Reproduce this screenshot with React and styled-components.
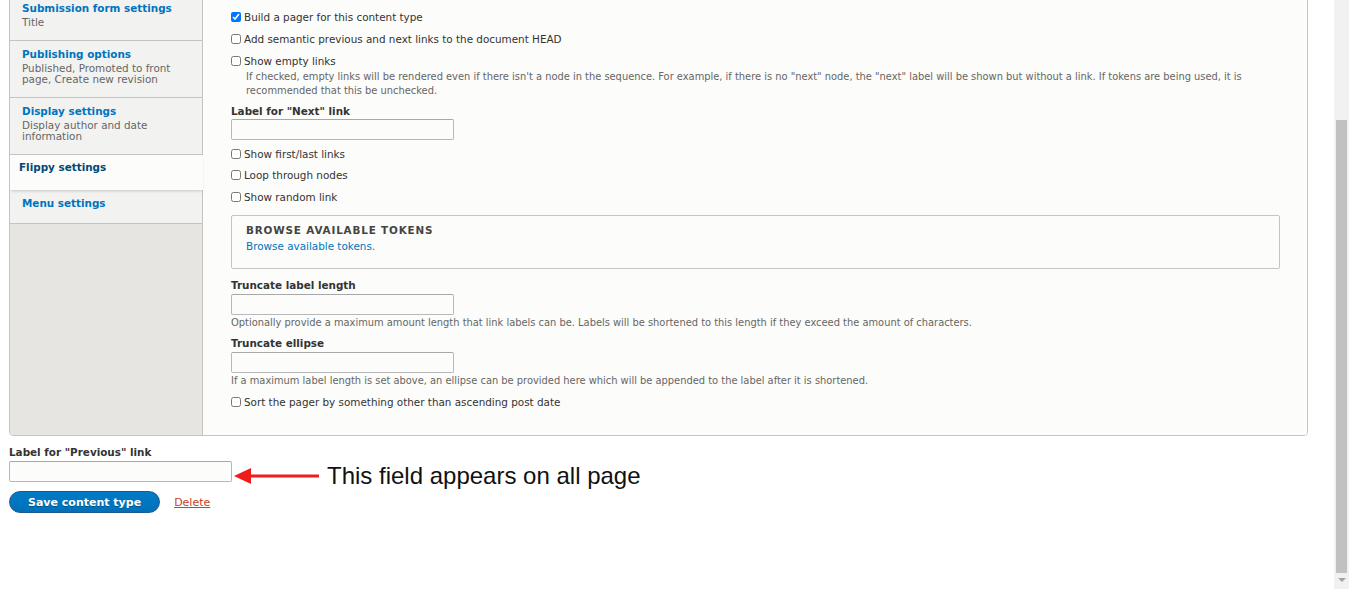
import React from "react";
import styled, { createGlobalStyle } from "styled-components";

const GlobalStyle = createGlobalStyle`
  html, body { margin: 0; padding: 0; height: 100%; overflow: hidden; background: #fff; }
  body { font-family: "DejaVu Sans", "Noto Sans", sans-serif; color: #333; }
  * { box-sizing: border-box; }
`;

const Page = styled.div`
  display: flex;
  height: 589px;
  width: 1349px;
  overflow: hidden;
`;

const Main = styled.main`
  flex: 1;
  padding: 0 26px 0 9px;
  min-width: 0;
`;

const ScrollTrack = styled.div`
  width: 15px;
  background: #f1f1f1;
  display: flex;
  flex-direction: column;
  align-items: center;
`;

const ScrollThumb = styled.div`
  margin-top: 120px;
  width: 11px;
  height: 453px;
  background: #c1c1c1;
`;

const ScrollArrow = styled.div`
  margin-top: 5px;
  width: 0;
  height: 0;
  border-left: 4px solid transparent;
  border-right: 4px solid transparent;
  border-top: 4px solid #a3a3a3;
`;

const VerticalTabs = styled.div`
  display: flex;
  margin-top: -6px;
  border: 1px solid #c4c4c0;
  border-radius: 0 0 4px 4px;
  overflow: hidden;
`;

const TabMenu = styled.ul`
  list-style: none;
  margin: 0;
  padding: 0;
  width: 193px;
  flex-shrink: 0;
  background: #e6e5e1;
  border-right: 1px solid #c4c4c0;
`;

const TabItem = styled.li`
  position: relative;
  padding: ${(p) =>
    p.$selected ? "6px 12px 15px 9px" : p.$compact ? "7px 12px 13px 12px" : "7px 12px 12px 12px"};
  background: ${(p) => (p.$selected ? "#fcfcfa" : "#f2f2f0")};
  border-bottom: 1px solid ${(p) => (p.$selected ? "transparent" : "#c4c4c0")};
  margin-right: ${(p) => (p.$selected ? "-1px" : "0")};
  box-shadow: ${(p) => (p.$selected ? "0 2px 3px -1px rgba(0,0,0,0.18)" : "none")};
  z-index: ${(p) => (p.$selected ? 1 : 0)};
`;

const TabTitle = styled.div`
  font-size: 10.4px;
  line-height: 13px;
  font-weight: bold;
  color: ${(p) => (p.$selected ? "#004875" : "#0074bd")};
`;

const TabSummary = styled.div`
  font-size: 10.4px;
  line-height: 11px;
  color: #666;
  margin-top: 2px;
`;

const Pane = styled.div`
  flex: 1;
  min-width: 0;
  background: #fcfcfa;
  padding: 15px 27px 26px 28px;
`;

const FormItem = styled.div`
  margin-top: ${(p) => p.$gap ?? 8}px;
`;

const CheckLabel = styled.label`
  display: flex;
  align-items: center;
  gap: 3px;
  font-size: 10.4px;
  line-height: 14px;
  color: #333;
`;

const Check = styled.input.attrs({ type: "checkbox" })`
  width: 10px;
  height: 10px;
  margin: 0;
  flex-shrink: 0;
`;

const Description = styled.div`
  font-size: 9.9px;
  line-height: 14px;
  color: #666;
  padding-left: ${(p) => (p.$indent ? "15px" : "0")};
  margin-top: ${(p) => p.$mt ?? 0}px;
`;

const FieldLabel = styled.label`
  display: block;
  font-size: 10.4px;
  line-height: 14px;
  font-weight: bold;
  color: #333;
`;

const TextInput = styled.input.attrs({ type: "text" })`
  display: block;
  width: 223px;
  height: 21px;
  margin: ${(p) => p.$mt ?? 1}px 0 0;
  padding: 2px 4px;
  border: 1px solid #b8b8b8;
  border-top-color: #a8a8a8;
  border-radius: 2px;
  background: #fcfcfa;
  font-family: inherit;
  font-size: 10.4px;
`;

const Fieldset = styled.div`
  border: 1px solid #c4c4c0;
  border-radius: 2px;
  padding: 7px 14px 15px;
  margin-top: ${(p) => p.$gap ?? 8}px;
`;

const Legend = styled.div`
  font-size: 10.4px;
  line-height: 14px;
  font-weight: bold;
  text-transform: uppercase;
  letter-spacing: 0.08em;
  color: #444;
`;

const Link = styled.a`
  display: block;
  margin-top: 2px;
  font-size: 10.4px;
  line-height: 14px;
  color: #0074bd;
  text-decoration: none;
`;

const BottomSection = styled.div`
  margin-top: 9px;
`;

const AnnotatedRow = styled.div`
  display: flex;
  align-items: flex-start;
  margin-top: 2px;
`;

const ArrowSvg = styled.svg`
  margin: 6px 0 0 2px;
  flex-shrink: 0;
`;

const Annotation = styled.div`
  margin: 1px 0 0 7px;
  font-family: "Liberation Sans", Arial, sans-serif;
  font-size: 24px;
  line-height: 28px;
  color: #111;
  white-space: nowrap;
`;

const Actions = styled.div`
  display: flex;
  align-items: center;
  gap: 14px;
  margin-top: 1px;
`;

const PrimaryButton = styled.button`
  height: 22px;
  padding: 0 18px;
  border: 1px solid #1e5c90;
  border-radius: 20em;
  background: linear-gradient(to bottom, #007bc6, #0071b8);
  color: #fff;
  font-family: inherit;
  font-size: 11px;
  font-weight: bold;
  text-shadow: 0 1px rgba(0, 0, 0, 0.3);
  cursor: pointer;
`;

const DeleteLink = styled.a`
  font-size: 11px;
  color: #c5422b;
  text-decoration: underline;
`;

const tabs = [
  { title: "Submission form settings", summary: ["Title"] },
  { title: "Publishing options", summary: ["Published, Promoted to front", "page, Create new revision"] },
  { title: "Display settings", summary: ["Display author and date", "information"] },
  { title: "Flippy settings", summary: [], selected: true },
  { title: "Menu settings", summary: [] },
];

function CheckItem({ children, checked, gap }) {
  return (
    <FormItem $gap={gap}>
      <CheckLabel>
        <Check defaultChecked={checked} />
        {children}
      </CheckLabel>
    </FormItem>
  );
}

export default function App() {
  return (
    <>
      <GlobalStyle />
      <Page>
        <Main>
          <VerticalTabs>
            <TabMenu>
              {tabs.map((t) => (
                <TabItem key={t.title} $selected={t.selected} $compact={t.summary.length === 0}>
                  <TabTitle $selected={t.selected}>{t.title}</TabTitle>
                  {t.summary.length > 0 && (
                    <TabSummary>
                      {t.summary.map((s) => (
                        <div key={s}>{s}</div>
                      ))}
                    </TabSummary>
                  )}
                </TabItem>
              ))}
            </TabMenu>
            <Pane>
              <CheckItem checked gap={0}>Build a pager for this content type</CheckItem>
              <CheckItem>Add semantic previous and next links to the document HEAD</CheckItem>
              <CheckItem>Show empty links</CheckItem>
              <Description $indent $mt={2}>
                If checked, empty links will be rendered even if there isn't a node in the sequence. For example, if there is no "next" node, the "next" label will be shown but without a link. If tokens are being used, it is recommended that this be unchecked.
              </Description>
              <FormItem $gap={6}>
                <FieldLabel>Label for "Next" link</FieldLabel>
                <TextInput />
              </FormItem>
              <CheckItem gap={7}>Show first/last links</CheckItem>
              <CheckItem gap={7}>Loop through nodes</CheckItem>
              <CheckItem>Show random link</CheckItem>
              <Fieldset $gap={11}>
                <Legend>Browse available tokens</Legend>
                <Link href="#">Browse available tokens.</Link>
              </Fieldset>
              <FormItem $gap={9}>
                <FieldLabel>Truncate label length</FieldLabel>
                <TextInput $mt={2} />
                <Description $mt={1}>
                  Optionally provide a maximum amount length that link labels can be. Labels will be shortened to this length if they exceed the amount of characters.
                </Description>
              </FormItem>
              <FormItem $gap={6}>
                <FieldLabel>Truncate ellipse</FieldLabel>
                <TextInput $mt={2} />
                <Description $mt={1}>
                  If a maximum label length is set above, an ellipse can be provided here which will be appended to the label after it is shortened.
                </Description>
              </FormItem>
              <CheckItem gap={7}>Sort the pager by something other than ascending post date</CheckItem>
            </Pane>
          </VerticalTabs>

          <BottomSection>
            <FieldLabel>Label for "Previous" link</FieldLabel>
            <AnnotatedRow>
              <TextInput $mt={0} />
              <ArrowSvg width="86" height="18" viewBox="0 0 86 18">
                <rect x="14" y="7.5" width="71" height="3" fill="#f21b1b" />
                <polygon points="0,9 17,1 17,17" fill="#f21b1b" />
              </ArrowSvg>
              <Annotation>This field appears on all page</Annotation>
            </AnnotatedRow>
            <Actions>
              <PrimaryButton type="button">Save content type</PrimaryButton>
              <DeleteLink href="#">Delete</DeleteLink>
            </Actions>
          </BottomSection>
        </Main>
        <ScrollTrack>
          <ScrollThumb />
          <ScrollArrow />
        </ScrollTrack>
      </Page>
    </>
  );
}
